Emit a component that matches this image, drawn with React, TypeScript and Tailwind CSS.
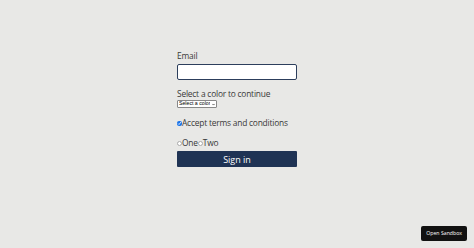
import React from "react";

const App: React.FC = () => (
  <div
    className="relative h-[248px] w-[474px] overflow-hidden bg-[#e8e8e6] text-[#383838]"
    style={{ fontFamily: '"Open Sans", sans-serif' }}
  >
    <form
      className="mx-auto flex w-[120px] flex-col pt-[50px]"
      onSubmit={(e) => e.preventDefault()}
    >
      <label className="text-[8.4px] leading-[12px] tracking-[-0.2px]">Email</label>
      <input
        type="email"
        className="mt-[2px] h-[16px] w-full rounded-[2px] border border-[#2c3e5c] bg-white"
      />

      <label className="mt-[8px] text-[8.4px] leading-[12px] tracking-[-0.2px]">
        Select a color to continue
      </label>
      <div className="relative h-[8px] w-[40px]">
        <select
          className="block h-[8px] w-[40px] appearance-none rounded-[1px] border border-[#888] bg-white py-0 pl-[1px] pr-[6px] text-[5.2px] leading-none text-black"
          style={{ fontFamily: '"Liberation Sans", Arial, sans-serif' }}
        >
          <option>Select a color</option>
          <option>Red</option>
          <option>Blue</option>
        </select>
        <svg
          viewBox="0 0 8 8"
          className="pointer-events-none absolute right-[2px] top-[2.5px] h-[3px] w-[3px]"
        >
          <path d="M1 2.5 L4 5.5 L7 2.5" fill="none" stroke="#000" strokeWidth="1.6" />
        </svg>
      </div>

      <label className="mt-[9px] flex items-center text-[8.4px] leading-[12px] tracking-[-0.2px]">
        <input
          type="checkbox"
          defaultChecked
          className="m-0 h-[5px] w-[5px] accent-[#1a73e8]"
        />
        Accept terms and conditions
      </label>

      <div className="mt-[8px] flex items-center text-[8.4px] leading-[12px] tracking-[-0.2px]">
        <input
          type="radio"
          name="n"
          className="m-0 h-[5px] w-[5px] appearance-none rounded-full border-[0.5px] border-[#aaa] bg-white"
        />
        <span>One</span>
        <input
          type="radio"
          name="n"
          className="m-0 h-[5px] w-[5px] appearance-none rounded-full border-[0.5px] border-[#aaa] bg-white"
        />
        <span>Two</span>
      </div>

      <button
        type="submit"
        className="mt-[2px] h-[16px] w-full rounded-[1px] bg-[#1f3354] text-[9px] leading-none text-white"
      >
        Sign in
      </button>
    </form>

    <button className="absolute bottom-[7px] right-[7px] rounded-[2px] bg-[#111] px-[5px] py-[5px] text-[5.2px] leading-none text-white">
      Open Sandbox
    </button>
  </div>
);

export default App;
